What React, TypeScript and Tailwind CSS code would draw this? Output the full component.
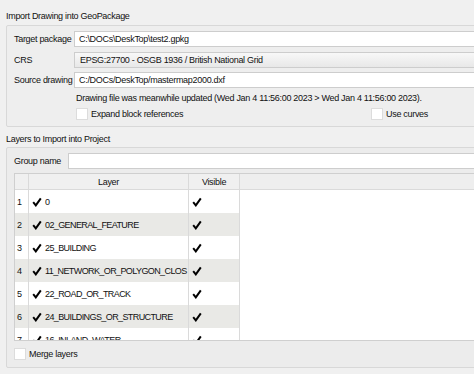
import React from "react";

const Check = () => (
  <svg width="10" height="10" viewBox="0 0 10 10" className="shrink-0">
    <path d="M1.2 5.2 L3.8 8.4 L8.8 1.4" fill="none" stroke="#000" strokeWidth="2" />
  </svg>
);

const Box = () => (
  <div className="w-[12px] h-[12px] bg-white border border-[#dcdcdc] shrink-0" />
);

const layers = [
  "0",
  "02_GENERAL_FEATURE",
  "25_BUILDING",
  "11_NETWORK_OR_POLYGON_CLOS",
  "22_ROAD_OR_TRACK",
  "24_BUILDINGS_OR_STRUCTURE",
  "16_INLAND_WATER",
];

const App = () => {
  return (
    <div className="w-[474px] h-[374px] overflow-hidden whitespace-nowrap bg-[#f0f0f0] text-[9px] tracking-[-0.3px] leading-[12px] text-[#111] font-['Liberation_Sans',sans-serif]">
      <div className="h-[25px] pt-[10px] pl-[6px]">Import Drawing into GeoPackage</div>

      {/* drawing group */}
      <div className="ml-[6px] w-[500px] h-[102px] border border-[#d8d8d8] rounded-[2px] bg-[#eeeeee] pl-[7px] pt-[5px] flex flex-col">
        <div className="flex items-center h-[16px]">
          <span className="w-[60px]">Target package</span>
          <div className="flex-1 h-[16px] bg-white border border-[#cdcdcd] pl-[4px] flex items-center">
            C:\DOCs\DeskTop\test2.gpkg
          </div>
        </div>
        <div className="flex items-center h-[16px] mt-[5px]">
          <span className="w-[60px]">CRS</span>
          <div className="flex-1 h-[16px] bg-gradient-to-b from-[#f8f8f8] to-[#e8e8e8] border border-[#cdcdcd] pl-[5px] flex items-center">
            EPSG:27700 - OSGB 1936 / British National Grid
          </div>
        </div>
        <div className="flex items-center h-[16px] mt-[4px]">
          <span className="w-[60px]">Source drawing</span>
          <div className="flex-1 h-[16px] bg-white border border-[#cdcdcd] pl-[4px] flex items-center">
            C:/DOCs/DeskTop/mastermap2000.dxf
          </div>
        </div>
        <div className="ml-[62px] mt-[4px] h-[12px]">
          Drawing file was meanwhile updated (Wed Jan 4 11:56:00 2023 &gt; Wed Jan 4 11:56:00 2023).
        </div>
        <div className="flex items-center mt-[4px] h-[12px]">
          <div className="ml-[62px] flex items-center gap-[3px] w-[295px]">
            <Box />
            <span>Expand block references</span>
          </div>
          <div className="flex items-center gap-[3px]">
            <Box />
            <span>Use curves</span>
          </div>
        </div>
      </div>

      <div className="h-[20px] pt-[6px] pl-[6px]">Layers to Import into Project</div>

      {/* layers group */}
      <div className="ml-[6px] w-[500px] h-[221px] border border-[#d8d8d8] rounded-[2px] bg-[#ececec] pl-[7px] pt-[5px] flex flex-col">
        <div className="flex items-center h-[16px]">
          <span className="w-[54px]">Group name</span>
          <div className="flex-1 h-[16px] bg-white border border-[#cdcdcd]" />
        </div>

        <div className="mt-[4px] h-[168px] overflow-hidden border border-[#cfcfcf] bg-white">
          <div className="flex h-[16px] bg-[#f0f0f0] border-b border-[#dadada]">
            <div className="w-[14px] border-r border-[#dadada]" />
            <div className="w-[160px] border-r border-[#dadada] flex items-center justify-center">Layer</div>
            <div className="w-[51px] border-r border-[#dadada] flex items-center justify-center">Visible</div>
            <div className="flex-1 bg-[#eeeeee]" />
          </div>
          {layers.map((name, i) => (
            <div key={name} className="flex h-[23px]">
              <div
                className={`w-[14px] border-r border-[#dadada] pl-[2px] flex items-center ${
                  i % 2 ? "bg-[#e9e9e6]" : "bg-white"
                }`}
              >
                {i + 1}
              </div>
              <div
                className={`w-[160px] border-r border-[#dadada] pl-[3px] flex items-center gap-[3px] overflow-hidden ${
                  i % 2 ? "bg-[#e9e9e6]" : "bg-white"
                }`}
              >
                <Check />
                <span className="tracking-[-0.6px]">{name}</span>
              </div>
              <div
                className={`w-[51px] border-r border-[#dadada] pl-[3px] flex items-center ${
                  i % 2 ? "bg-[#e9e9e6]" : "bg-white"
                }`}
              >
                <Check />
              </div>
              <div className="flex-1 bg-white" />
            </div>
          ))}
        </div>

        <div className="flex items-center gap-[3px] mt-[7px] h-[12px]">
          <Box />
          <span>Merge layers</span>
        </div>
      </div>
    </div>
  );
};

export default App;
